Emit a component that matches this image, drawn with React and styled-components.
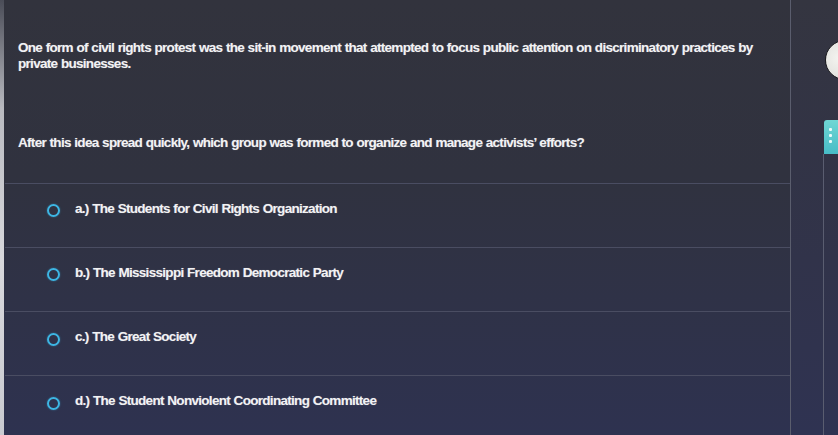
import React from "react";
import styled, { createGlobalStyle } from "styled-components";

const Global = createGlobalStyle`
  *, *::before, *::after { box-sizing: border-box; }
  html, body { margin: 0; padding: 0; background: #30323f; }
  body { font-family: "Liberation Sans", Arial, sans-serif; }
`;

const Screen = styled.div`
  width: 838px;
  height: 435px;
  display: flex;
  overflow: hidden;
  background: linear-gradient(180deg, #32333d 0%, #30323f 40%, #2e3250 100%);
`;

const EdgeStrip = styled.div`
  width: 4px;
  flex: none;
  background: linear-gradient(180deg, #4a4c57 0%, #b9bac0 25%, #d8d8dc 60%, #c9cad0 100%);
`;

const Main = styled.main`
  width: 787px;
  flex: none;
  display: flex;
  flex-direction: column;
  overflow: hidden;
  border-right: 1px solid #5a5d6d;
`;

const Prompt = styled.p`
  flex: none;
  margin: 0;
  padding: 40px 0 0 14px;
  color: #f2f2f4;
  font-size: 13.5px;
  font-weight: 700;
  line-height: 16px;
  letter-spacing: -0.7px;
  word-spacing: 0.5px;
  text-shadow: 0 0 1px rgba(255, 255, 255, 0.35);
`;

const Question = styled(Prompt)`
  padding-top: 63px;
  height: 111px;
`;

const Options = styled.div`
  flex: none;
  display: flex;
  flex-direction: column;
  margin-left: 1px;
`;

const OptionRow = styled.label`
  height: 64px;
  flex: none;
  display: flex;
  align-items: flex-start;
  gap: 15px;
  padding: 17px 0 0 42px;
  border-top: 1px solid #4a4d62;
  color: #f2f2f4;
  font-size: 13.5px;
  font-weight: 700;
  letter-spacing: -0.7px;
  word-spacing: 0.5px;
  text-shadow: 0 0 1px rgba(255, 255, 255, 0.35);
  line-height: 16px;
`;

const Radio = styled.span`
  flex: none;
  width: 13px;
  height: 13px;
  margin-top: ${(p) => p.$offset}px;
  border: 2px solid #3db6e4;
  border-radius: 50%;
  box-shadow: 0 0 2px rgba(61, 182, 228, 0.5);
`;

const Side = styled.aside`
  flex: 1;
  display: flex;
  flex-direction: column;
  padding-top: 40px;
  overflow: hidden;
  background: linear-gradient(180deg, #343540 0%, #31334a 60%, #2f3352 100%);
`;

const Knob = styled.div`
  width: 40px;
  height: 40px;
  flex: none;
  margin-left: 34px;
  border-radius: 50%;
  border: 1px solid #1a1a1e;
  background: radial-gradient(circle at 35% 45%, #f4f4f0 0%, #e4e4e0 55%, #bdbdb8 100%);
`;

const Tab = styled.div`
  width: 20px;
  height: 34px;
  flex: none;
  margin: 40px 0 0 33px;
  border-radius: 3px 0 0 0;
  background: linear-gradient(180deg, #6fd7d4 0%, #47bcc6 100%);
  display: flex;
  flex-direction: column;
  gap: 3px;
  padding: 8px 0 0 5px;
`;

const TabDot = styled.span`
  width: 3px;
  height: 3px;
  background: #e9fbfa;
  border-radius: 1px;
`;

const Rail = styled.div`
  flex: 1;
  margin-left: 32px;
  border-left: 1px solid #5a5d70;
`;

const options = [
  { key: "a", text: "The Students for Civil Rights Organization", offset: 3 },
  { key: "b", text: "The Mississippi Freedom Democratic Party", offset: 3 },
  { key: "c", text: "The Great Society", offset: 4 },
  { key: "d", text: "The Student Nonviolent Coordinating Committee", offset: 4 },
];

export default function App() {
  return (
    <>
      <Global />
      <Screen>
        <EdgeStrip />
        <Main>
          <Prompt>
            One form of civil rights protest was the sit-in movement that attempted to focus public
            attention on discriminatory practices by
            <br />
            private businesses.
          </Prompt>
          <Question>
            After this idea spread quickly, which group was formed to organize and manage activists’
            efforts?
          </Question>
          <Options>
            {options.map((o) => (
              <OptionRow key={o.key}>
                <Radio $offset={o.offset} />
                <span>
                  {o.key}.) {o.text}
                </span>
              </OptionRow>
            ))}
          </Options>
        </Main>
        <Side>
          <Knob />
          <Tab>
            <TabDot />
            <TabDot />
            <TabDot />
          </Tab>
          <Rail />
        </Side>
      </Screen>
    </>
  );
}
